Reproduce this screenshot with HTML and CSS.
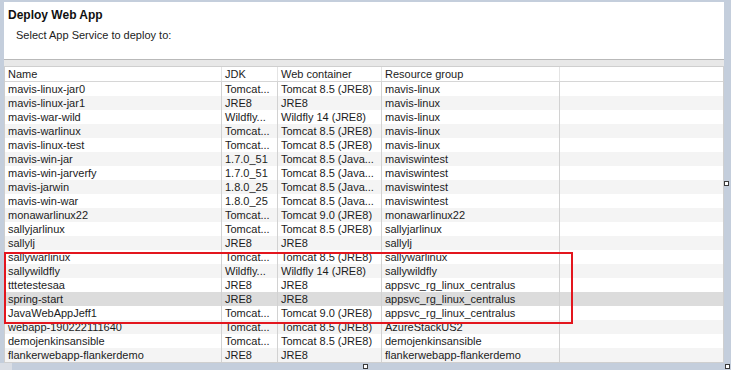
FILE: index.html
```html
<!DOCTYPE html>
<html lang="en">
<head>
  <meta charset="UTF-8" />
  <meta name="viewport" content="width=device-width, initial-scale=1.0" />
  <title>Deploy Web App</title>
  <link rel="stylesheet" href="styles.css">
</head>
<body>
  <div class="dialog">
    <div class="dialog-head">
      <h1>Deploy Web App</h1>
      <p>Select App Service to deploy to:</p>
    </div>
    <div class="strip"></div>
    <div class="grid">
      <div class="row head">
        <div>Name</div><div>JDK</div><div>Web container</div><div>Resource group</div><div></div>
      </div>
      <div class="row"><div>mavis-linux-jar0</div><div>Tomcat...</div><div>Tomcat 8.5 (JRE8)</div><div>mavis-linux</div><div></div></div>
      <div class="row"><div>mavis-linux-jar1</div><div>JRE8</div><div>JRE8</div><div>mavis-linux</div><div></div></div>
      <div class="row"><div>mavis-war-wild</div><div>Wildfly...</div><div>Wildfly 14 (JRE8)</div><div>mavis-linux</div><div></div></div>
      <div class="row"><div>mavis-warlinux</div><div>Tomcat...</div><div>Tomcat 8.5 (JRE8)</div><div>mavis-linux</div><div></div></div>
      <div class="row"><div>mavis-linux-test</div><div>Tomcat...</div><div>Tomcat 8.5 (JRE8)</div><div>mavis-linux</div><div></div></div>
      <div class="row"><div>mavis-win-jar</div><div>1.7.0_51</div><div>Tomcat 8.5 (Java...</div><div>maviswintest</div><div></div></div>
      <div class="row"><div>mavis-win-jarverfy</div><div>1.7.0_51</div><div>Tomcat 8.5 (Java...</div><div>maviswintest</div><div></div></div>
      <div class="row"><div>mavis-jarwin</div><div>1.8.0_25</div><div>Tomcat 8.5 (Java...</div><div>maviswintest</div><div></div></div>
      <div class="row"><div>mavis-win-war</div><div>1.8.0_25</div><div>Tomcat 8.5 (Java...</div><div>maviswintest</div><div></div></div>
      <div class="row"><div>monawarlinux22</div><div>Tomcat...</div><div>Tomcat 9.0 (JRE8)</div><div>monawarlinux22</div><div></div></div>
      <div class="row"><div>sallyjarlinux</div><div>Tomcat...</div><div>Tomcat 8.5 (JRE8)</div><div>sallyjarlinux</div><div></div></div>
      <div class="row"><div>sallylj</div><div>JRE8</div><div>JRE8</div><div>sallylj</div><div></div></div>
      <div class="row"><div>sallywarlinux</div><div>Tomcat...</div><div>Tomcat 8.5 (JRE8)</div><div>sallywarlinux</div><div></div></div>
      <div class="row"><div>sallywildfly</div><div>Wildfly...</div><div>Wildfly 14 (JRE8)</div><div>sallywildfly</div><div></div></div>
      <div class="row"><div>tttetestesaa</div><div>JRE8</div><div>JRE8</div><div>appsvc_rg_linux_centralus</div><div></div></div>
      <div class="row selected"><div>spring-start</div><div>JRE8</div><div>JRE8</div><div>appsvc_rg_linux_centralus</div><div></div></div>
      <div class="row"><div>JavaWebAppJeff1</div><div>Tomcat...</div><div>Tomcat 9.0 (JRE8)</div><div>appsvc_rg_linux_centralus</div><div></div></div>
      <div class="row"><div>webapp-190222111640</div><div>Tomcat...</div><div>Tomcat 8.5 (JRE8)</div><div>AzureStackUS2</div><div></div></div>
      <div class="row"><div>demojenkinsansible</div><div>Tomcat...</div><div>Tomcat 8.5 (JRE8)</div><div>demojenkinsansible</div><div></div></div>
      <div class="row"><div>flankerwebapp-flankerdemo</div><div>JRE8</div><div>JRE8</div><div>flankerwebapp-flankerdemo</div><div></div></div>
    </div>
  </div>
  <div class="foot"><div class="corner"></div></div>

  <!-- annotation overlays -->
  <div class="highlight"></div>
  <div class="handle h-right"></div>
  <div class="handle h-bottom"></div>
  <div class="handle h-corner"></div>
</body>
</html>
```

FILE: styles.css
```css
body {
  margin: 0;
  background: #c4cedc;
  font-family: "Liberation Sans", Arial, sans-serif;
  color: #1c1c1c;
  position: relative;
  height: 370px;
  overflow: hidden;
}
.dialog {
  margin: 2px 0 0 4px;
  width: 720px;
  background: #fff;
}
.dialog-head {
  height: 57px;
  box-sizing: border-box;
  padding: 6px 0 0 4px;
}
.dialog-head h1 {
  margin: 0;
  font-size: 12px;
  line-height: 15px;
  font-weight: bold;
  color: #111;
}
.dialog-head p {
  margin: 5px 0 0 8px;
  font-size: 11px;
  line-height: 14px;
  color: #1c1c1c;
}
.strip {
  border-top: 1px solid #b9b9b9;
  height: 6px;
  background: #e8e8e8;
}
.grid {
  border: 1px solid #cfcfcf;
  font-size: 11px;
}
.row {
  display: grid;
  grid-template-columns: 217px 56px 104px 178px 1fr;
  height: 14px;
  line-height: 14px;
  background: #fff;
}
.row:nth-child(odd) {
  background: #f4f4f4;
}
.row > div {
  padding-left: 3px;
  border-right: 1px solid #d2d2d2;
  white-space: nowrap;
  overflow: hidden;
}
.row > div:last-child {
  border-right: none;
}
.row.head {
  background: #fff;
  border-bottom: 1px solid #d6d6d6;
}
.row.head > div {
  border-right-color: #e4e4e4;
}
.row.selected {
  background: #dcdcdc;
}
.foot {
  height: 7px;
}
.corner {
  width: 12px;
  height: 7px;
  background: #dadee5;
}
.highlight {
  position: absolute;
  left: 4px;
  top: 252px;
  width: 569px;
  height: 72px;
  box-sizing: border-box;
  border: 2.5px solid #e3161e;
}
.handle {
  position: absolute;
  width: 5px;
  height: 5px;
  box-sizing: border-box;
  background: #fff;
  border: 1px solid #3a3a3a;
}
.h-right { left: 724px; top: 181px; }
.h-bottom { left: 363px; top: 364px; }
.h-corner { left: 725px; top: 364px; }
```
